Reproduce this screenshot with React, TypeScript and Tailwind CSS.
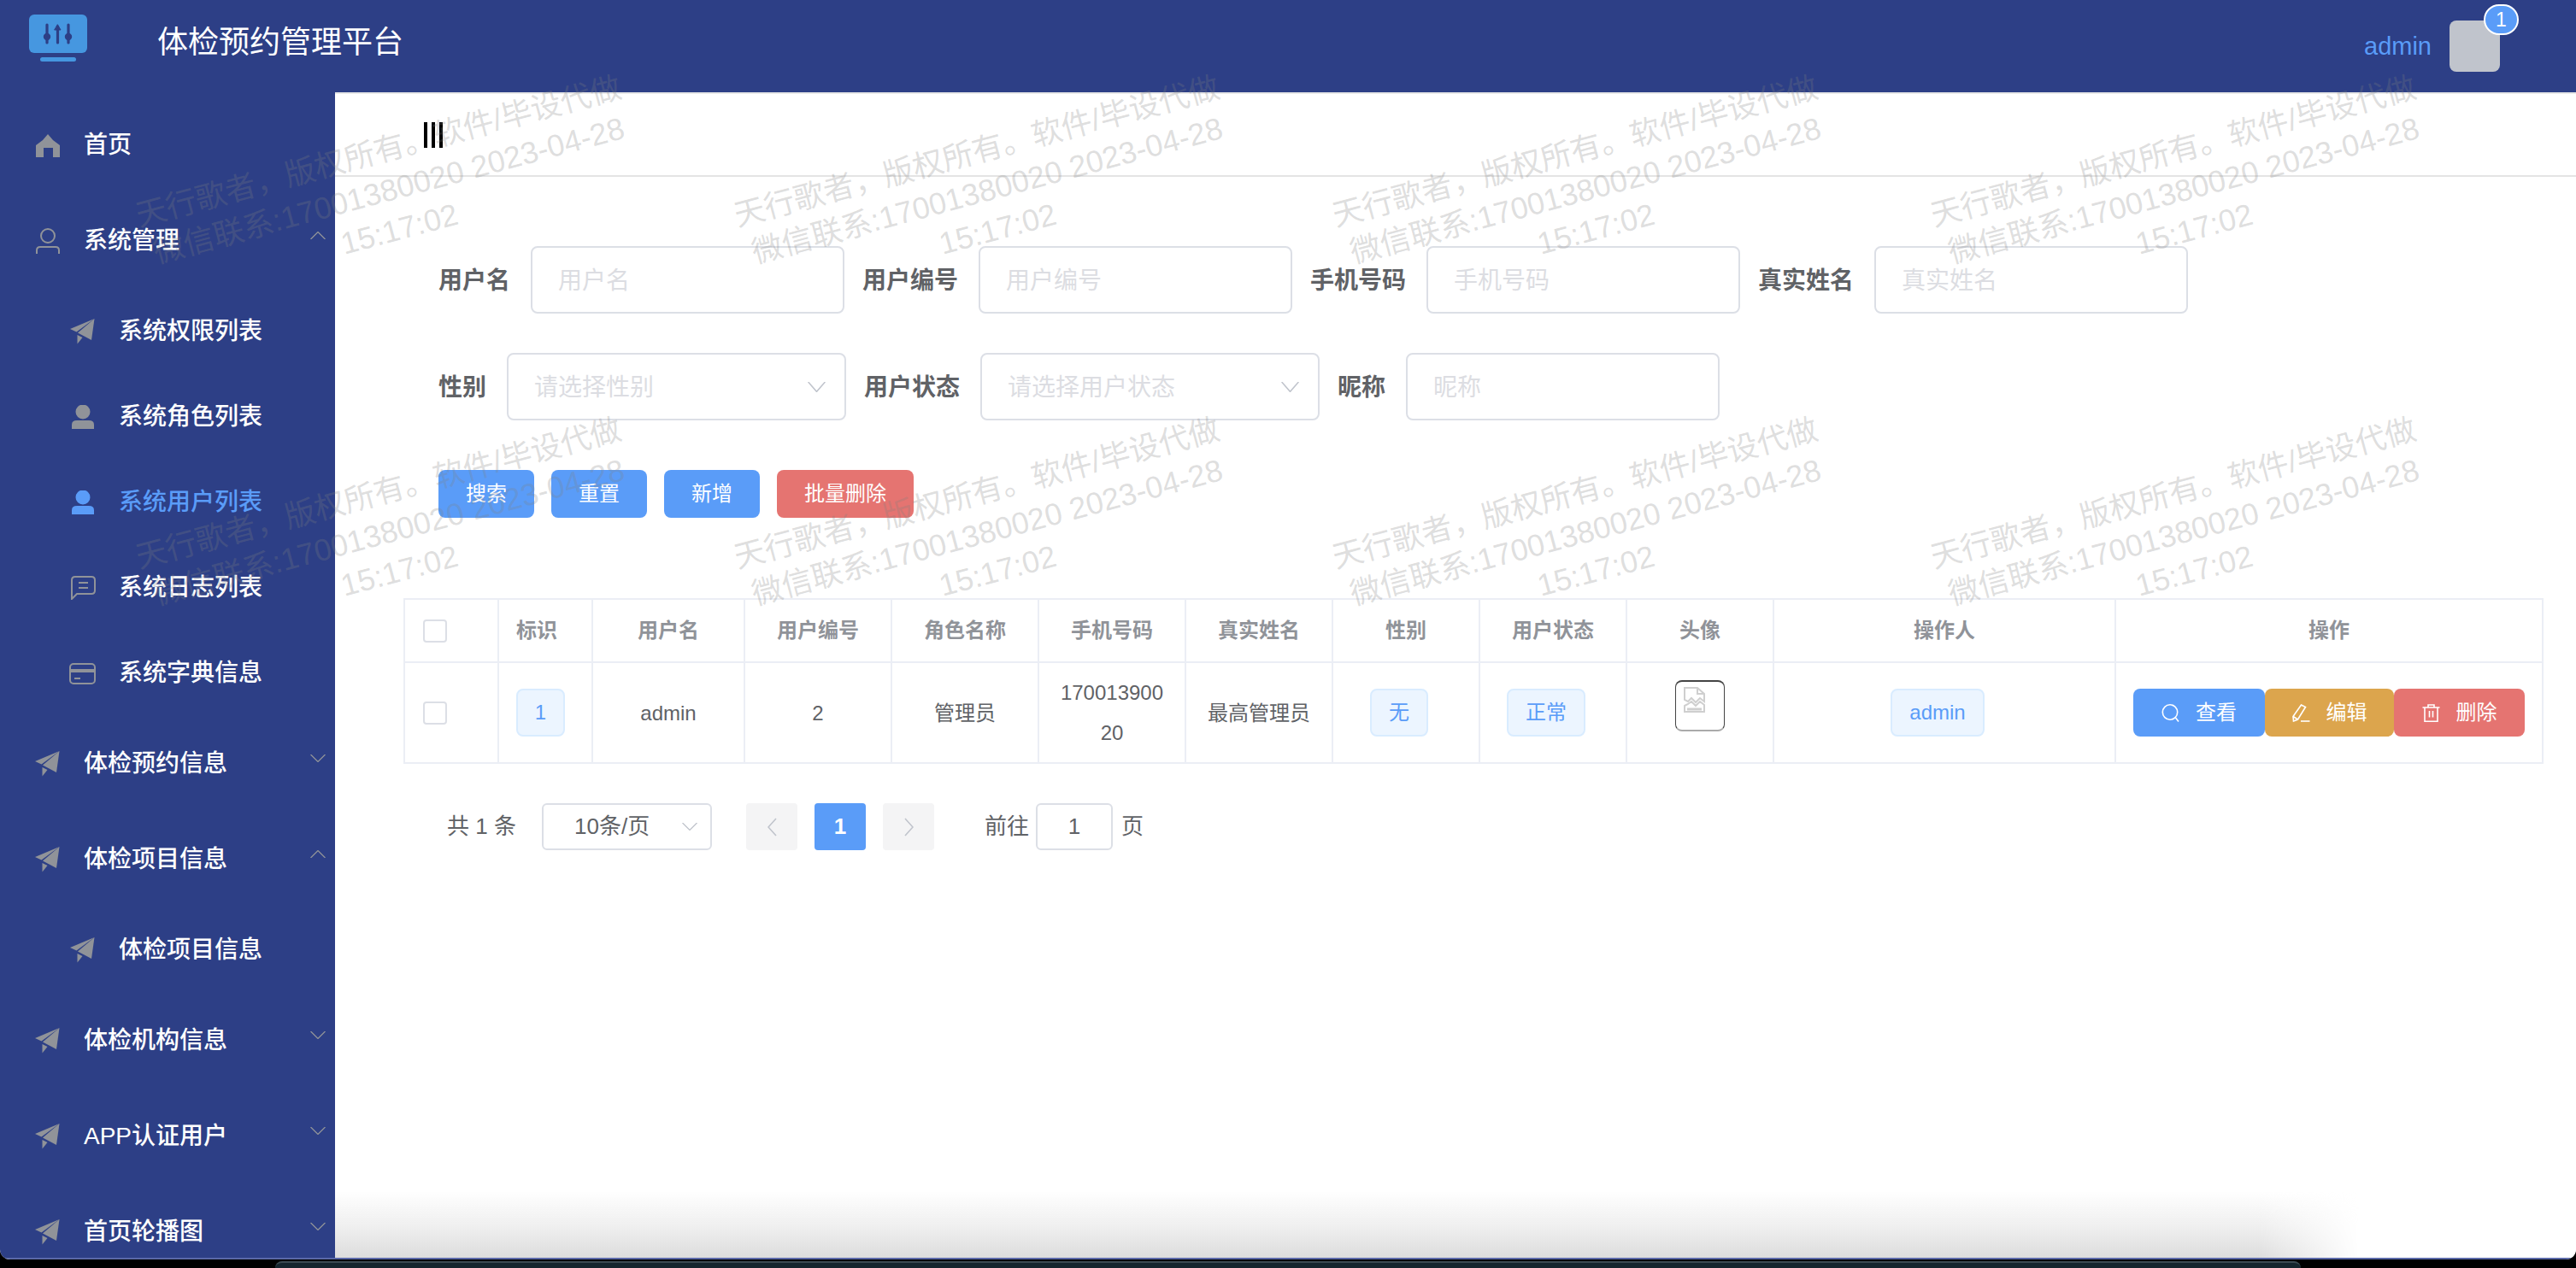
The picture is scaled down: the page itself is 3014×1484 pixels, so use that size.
import React from "react";

const FONT = '"Liberation Sans", "Noto Sans CJK SC", sans-serif';

function Plane() {
  return (
    <svg width="29" height="30" viewBox="0 0 29 30" fill="#909399">
      <path d="M28.5 0 L0 12 L7.5 15.5 Z" />
      <path d="M28.5 0 L9 16.5 L25 25 Z" />
      <path d="M8.5 19 V29.5 L14.5 22 Z" />
    </svg>
  );
}

function Home() {
  return (
    <svg width="28" height="27" viewBox="0 0 28 27" fill="#909399">
      <path d="M14 0 L20 7 L28 13 V27 H20 V16 H9 V27 H0 V13 L8 7 Z" />
    </svg>
  );
}

function UserLine() {
  return (
    <svg width="28" height="30" viewBox="0 0 28 30" fill="none" stroke="#909399" strokeWidth="2">
      <ellipse cx="14" cy="9" rx="8" ry="8" />
      <path d="M1 30 V26 Q1 22 5 22 H23 Q27 22 27 26 V30" />
    </svg>
  );
}

function UserFill({ color = "#909399" }: { color?: string }) {
  return (
    <svg width="28" height="28" viewBox="0 0 28 28" fill={color}>
      <ellipse cx="14" cy="8" rx="8.5" ry="8.5" />
      <path d="M1 28 V23 Q1 18 7 18 H21 Q27 18 27 23 V28 Z" />
    </svg>
  );
}

function Chat() {
  return (
    <svg width="30" height="28" viewBox="0 0 30 28" fill="none" stroke="#909399" strokeWidth="2">
      <path d="M2 27 V5 Q2 1 6 1 H25 Q29 1 29 5 V17 Q29 21 25 21 H8 Z" />
      <path d="M10 8 H21 M10 14 H21" />
    </svg>
  );
}

function Card() {
  return (
    <svg width="31" height="25" viewBox="0 0 31 25" fill="none" stroke="#909399" strokeWidth="2">
      <rect x="1" y="1" width="29" height="23" rx="4" />
      <path d="M1 9 H30" strokeWidth="4" />
      <path d="M6 18 H13" />
    </svg>
  );
}

function Chevron({ up = false, color = "#909399", w = 18, h = 9 }: { up?: boolean; color?: string; w?: number; h?: number }) {
  return (
    <svg width={w} height={h} viewBox="0 0 18 9" preserveAspectRatio="none" fill="none" stroke={color} strokeWidth="1.3">
      {up ? <path d="M0.5 9 L9 0.5 L17.5 9" /> : <path d="M0.5 0 L9 8.5 L17.5 0" />}
    </svg>
  );
}

function MenuTop({ icon, label, chevron }: { icon: React.ReactNode; label: string; chevron?: "up" | "down" }) {
  return (
    <div className="flex h-[112px] shrink-0 items-center pl-[41px]">
      <div className="mr-[28px] flex w-[29px] justify-center">{icon}</div>
      <span className="text-[28px] font-medium text-white">{label}</span>
      {chevron && (
        <div className="mb-[13px] ml-auto mr-[11px]">
          <Chevron up={chevron === "up"} />
        </div>
      )}
    </div>
  );
}

function MenuSub({ icon, label, active }: { icon: React.ReactNode; label: string; active?: boolean }) {
  return (
    <div className="flex h-[100px] shrink-0 items-center pl-[81px]">
      <div className="mr-[27px] flex w-[31px] justify-center">{icon}</div>
      <span className={active ? "text-[28px] font-medium text-[#5a9cf8]" : "text-[28px] font-medium text-white"}>{label}</span>
    </div>
  );
}

function Sidebar() {
  return (
    <aside className="flex w-[392px] shrink-0 flex-col bg-[#2d3f86] pt-[6px]">
      <MenuTop icon={<Home />} label="首页" />
      <MenuTop icon={<UserLine />} label="系统管理" chevron="up" />
      <MenuSub icon={<Plane />} label="系统权限列表" />
      <MenuSub icon={<UserFill />} label="系统角色列表" />
      <MenuSub icon={<UserFill color="#5a9cf8" />} label="系统用户列表" active />
      <MenuSub icon={<Chat />} label="系统日志列表" />
      <MenuSub icon={<Card />} label="系统字典信息" />
      <MenuTop icon={<Plane />} label="体检预约信息" chevron="down" />
      <MenuTop icon={<Plane />} label="体检项目信息" chevron="up" />
      <MenuSub icon={<Plane />} label="体检项目信息" />
      <MenuTop icon={<Plane />} label="体检机构信息" chevron="down" />
      <MenuTop icon={<Plane />} label="APP认证用户" chevron="down" />
      <MenuTop icon={<Plane />} label="首页轮播图" chevron="down" />
    </aside>
  );
}

function Header() {
  return (
    <header className="flex h-[108px] shrink-0 items-center bg-[#2d3f86] pl-[34px]">
      <svg className="mb-[19px]" width="68" height="55" viewBox="0 0 68 55">
        <rect x="0" y="0" width="68" height="45" rx="6" fill="#4697e0" />
        <rect x="13" y="50" width="42" height="5" rx="2.5" fill="#4697e0" />
        <g stroke="#2d3f86" strokeWidth="3.2" fill="#2d3f86" strokeLinecap="round">
          <path d="M21 12 V33 M33.5 14 V33 M46 12 V33" />
          <circle cx="21" cy="26" r="2.6" />
          <path d="M33.5 12 L37 18 H30 Z" strokeWidth="1" />
          <circle cx="46" cy="26" r="2.6" />
        </g>
      </svg>
      <h1 className="mb-[9px] ml-[82px] text-[36px] font-normal text-white">体检预约管理平台</h1>
      <span className="ml-auto mt-[2px] text-[29px] text-[#5a9cf8]">admin</span>
      <div className="relative ml-[21px] mr-[89px] h-[60px] w-[59px] rounded-[8px] bg-[#c0c4cc]">
        <span className="absolute left-[40px] top-[-19px] flex h-[36px] w-[41px] items-center justify-center rounded-full border-2 border-white bg-[#5a9cf8] text-[23px] text-white">
          1
        </span>
      </div>
    </header>
  );
}

function Field({ label, placeholder }: { label: string; placeholder: string }) {
  return (
    <div className="flex items-center gap-[24px]">
      <label className="pt-[3px] text-[28px] font-bold text-[#606266]">{label}</label>
      <input
        placeholder={placeholder}
        className="h-[79px] w-[367px] rounded-[8px] border-2 border-[#dcdfe6] bg-transparent px-[30px] pt-[3px] text-[28px] outline-none placeholder:text-[#dcdde2]"
      />
    </div>
  );
}

function SelectField({ label, placeholder }: { label: string; placeholder: string }) {
  return (
    <div className="flex items-center gap-[24px]">
      <label className="pt-[3px] text-[28px] font-bold text-[#606266]">{label}</label>
      <div className="flex h-[79px] w-[397px] items-center justify-between rounded-[8px] border-2 border-[#dcdfe6] pl-[30px] pr-[22px]">
        <span className="pt-[3px] text-[28px] text-[#dcdde2]">{placeholder}</span>
        <Chevron color="#c0c4cc" w={21} h={12} />
      </div>
    </div>
  );
}

function Tag({ children }: { children: React.ReactNode }) {
  return (
    <span className="mr-[16px] inline-flex h-[56px] items-center rounded-[8px] border-2 border-[#d9ecff] bg-[#ecf5ff] px-[20px] text-[24px] leading-none text-[#5a9cf8]">
      {children}
    </span>
  );
}

function Check() {
  return <span className="block h-[27px] w-[28px] rounded-[4px] border-2 border-[#dcdfe6] bg-white" />;
}

function BrokenImage() {
  return (
    <svg width="25" height="30" viewBox="0 0 25 30" fill="none" stroke="#cfcfcf" strokeWidth="2">
      <path d="M1 15 V1 H16 L24 8 V17 L19 13 L14 18 L9 13 L5 17 Z" />
      <path d="M16 1 V8 H24" />
      <path d="M1 22 L5 20 L9 17 L14 22 L19 17 L24 21 V29 H1 Z" />
      <path d="M4 26 H21" strokeWidth="3" />
    </svg>
  );
}

function Th({ children }: { children?: React.ReactNode }) {
  return <th className="border-2 border-[#ebeef5] text-center text-[24px] font-bold text-[#909399]">{children}</th>;
}

function Td({ children }: { children?: React.ReactNode }) {
  return <td className="border-2 border-[#ebeef5] px-[22px] text-center text-[24px] leading-[47px] text-[#606266]">{children}</td>;
}

function UserTable() {
  return (
    <table className="ml-[80px] w-[2502px] table-fixed border-collapse">
      <colgroup>
        <col className="w-[110px]" />
        <col className="w-[110px]" />
        <col className="w-[178px]" />
        <col className="w-[172px]" />
        <col className="w-[172px]" />
        <col className="w-[172px]" />
        <col className="w-[172px]" />
        <col className="w-[172px]" />
        <col className="w-[172px]" />
        <col className="w-[172px]" />
        <col className="w-[400px]" />
        <col className="w-[500px]" />
      </colgroup>
      <thead>
        <tr className="h-[74px]">
          <th className="border-2 border-[#ebeef5] pl-[21px]">
            <Check />
          </th>
          <th className="border-2 border-[#ebeef5] pl-[20px] text-left text-[24px] font-bold text-[#909399]">标识</th>
          <Th>用户名</Th>
          <Th>用户编号</Th>
          <Th>角色名称</Th>
          <Th>手机号码</Th>
          <Th>真实姓名</Th>
          <Th>性别</Th>
          <Th>用户状态</Th>
          <Th>头像</Th>
          <Th>操作人</Th>
          <Th>操作</Th>
        </tr>
      </thead>
      <tbody>
        <tr className="h-[118px]">
          <td className="border-2 border-[#ebeef5] pl-[21px]">
            <Check />
          </td>
          <td className="border-2 border-[#ebeef5] pl-[20px]">
            <span className="inline-flex h-[56px] w-[57px] items-center justify-center rounded-[8px] border-2 border-[#d9ecff] bg-[#ecf5ff] text-[24px] text-[#5a9cf8]">
              1
            </span>
          </td>
          <Td>admin</Td>
          <Td>2</Td>
          <Td>管理员</Td>
          <Td>
            <span className="break-all">17001390020</span>
          </Td>
          <Td>
            <span className="whitespace-nowrap">最高管理员</span>
          </Td>
          <Td>
            <Tag>无</Tag>
          </Td>
          <Td>
            <Tag>正常</Tag>
          </Td>
          <Td>
            <div className="mx-auto mb-[16px] flex h-[60px] w-[58px] justify-center overflow-hidden rounded-[8px] border border-b-2 border-t-2 border-[#444444] border-b-[#aaaaaa] pt-[6px]">
              <div className="mr-[14px]">
                <BrokenImage />
              </div>
            </div>
          </Td>
          <Td>
            <Tag>admin</Tag>
          </Td>
          <td className="border-2 border-[#ebeef5] pl-[20px]">
            <div className="flex">
              <ActionButton color="bg-[#5a9cf8]" icon={<SearchIcon />} label="查看" w="w-[154px]" />
              <ActionButton color="bg-[#dca54d]" icon={<EditIcon />} label="编辑" w="w-[151px]" />
              <ActionButton color="bg-[#e57471]" icon={<TrashIcon />} label="删除" w="w-[153px]" />
            </div>
          </td>
        </tr>
      </tbody>
    </table>
  );
}

function ActionButton({ color, icon, label, w }: { color: string; icon: React.ReactNode; label: string; w: string }) {
  return (
    <button className={`flex h-[56px] items-center justify-center gap-[19px] rounded-[8px] text-[24px] text-white ${color} ${w}`}>
      {icon}
      <span>{label}</span>
    </button>
  );
}

function SearchIcon() {
  return (
    <svg width="21" height="21" viewBox="0 0 21 21" fill="none" stroke="white" strokeWidth="1.6">
      <circle cx="10" cy="9.5" r="8.7" />
      <path d="M16.5 16 L20 20.5" />
    </svg>
  );
}

function EditIcon() {
  return (
    <svg width="21" height="21" viewBox="0 0 21 21" fill="none" stroke="white" strokeWidth="1.6">
      <path d="M10.5 1 L15.5 3.5 L6.5 18 L1.5 20 L1 14.5 Z" />
      <path d="M1 14.5 L6.5 18" />
      <path d="M10 20 H20.5" />
    </svg>
  );
}

function TrashIcon() {
  return (
    <svg width="21" height="21" viewBox="0 0 21 21" fill="none" stroke="white" strokeWidth="1.6">
      <path d="M0.5 4 H20.5 M7 4 V1 H14 V4" />
      <path d="M3 4 V20.2 H18 V4" />
      <path d="M8.5 8 V15.5 M12.5 8 V15.5" />
    </svg>
  );
}

function Pagination() {
  return (
    <div className="ml-[131px] mt-[46px] flex h-[55px] items-center text-[26px] text-[#606266]">
      <span className="w-[111px]">共 1 条</span>
      <div className="flex h-[55px] w-[199px] items-center rounded-[6px] border-2 border-[#dcdfe6] pl-[36px] pr-[15px]">
        <span>10条/页</span>
        <div className="ml-auto">
          <Chevron color="#c0c4cc" />
        </div>
      </div>
      <button className="ml-[40px] flex h-[55px] w-[60px] items-center justify-center rounded-[4px] bg-[#f4f4f5]">
        <svg width="11" height="22" viewBox="0 0 11 22" fill="none" stroke="#c0c4cc" strokeWidth="1.6">
          <path d="M10 1 L1 11 L10 21" />
        </svg>
      </button>
      <button className="ml-[20px] flex h-[55px] w-[60px] items-center justify-center rounded-[4px] bg-[#5a9cf8] font-bold text-white">
        1
      </button>
      <button className="ml-[20px] flex h-[55px] w-[60px] items-center justify-center rounded-[4px] bg-[#f4f4f5]">
        <svg width="11" height="22" viewBox="0 0 11 22" fill="none" stroke="#c0c4cc" strokeWidth="1.6">
          <path d="M1 1 L10 11 L1 21" />
        </svg>
      </button>
      <span className="ml-[59px]">前往</span>
      <div className="ml-[8px] flex h-[55px] w-[90px] items-center justify-center rounded-[6px] border-2 border-[#dcdfe6]">1</div>
      <span className="ml-[10px]">页</span>
    </div>
  );
}

function Watermark() {
  const tiles = [0, 1, 2, 3, 4, 5, 6, 7];
  return (
    <div className="pointer-events-none absolute left-[105px] top-[22px] grid grid-cols-[repeat(4,700px)] grid-rows-[repeat(2,400px)]">
      {tiles.map((i) => (
        <div key={i} className="flex items-center justify-center">
          <div className="rotate-[-15deg] whitespace-nowrap text-center text-[36px] leading-[47px] text-[rgba(128,128,128,0.27)]">
            <div>天行歌者，版权所有。软件/毕设代做</div>
            <div>微信联系:17001380020 2023-04-28</div>
            <div>15:17:02</div>
          </div>
        </div>
      ))}
    </div>
  );
}

function Main() {
  return (
    <main className="relative flex-1 bg-white">
      <div className="flex h-[99px] items-center gap-[5px] border-y-2 border-t-[#e8e8e8] border-b-[#e4e4e4] pl-[104px]">
        <span className="h-[30px] w-[4px] bg-black" />
        <span className="h-[30px] w-[4px] bg-black" />
        <span className="h-[30px] w-[4px] bg-black" />
      </div>
      <div className="pl-[121px] pt-[81px]">
        <div className="flex gap-[21px]">
          <Field label="用户名" placeholder="用户名" />
          <Field label="用户编号" placeholder="用户编号" />
          <Field label="手机号码" placeholder="手机号码" />
          <Field label="真实姓名" placeholder="真实姓名" />
        </div>
        <div className="mt-[46px] flex gap-[21px]">
          <SelectField label="性别" placeholder="请选择性别" />
          <SelectField label="用户状态" placeholder="请选择用户状态" />
          <Field label="昵称" placeholder="昵称" />
        </div>
        <div className="mt-[58px] flex gap-[20px]">
          <button className="h-[56px] w-[112px] rounded-[8px] bg-[#5a9cf8] text-[24px] text-white">搜索</button>
          <button className="h-[56px] w-[112px] rounded-[8px] bg-[#5a9cf8] text-[24px] text-white">重置</button>
          <button className="h-[56px] w-[112px] rounded-[8px] bg-[#5a9cf8] text-[24px] text-white">新增</button>
          <button className="h-[56px] w-[160px] rounded-[8px] bg-[#e57471] text-[24px] text-white">批量删除</button>
        </div>
      </div>
      <div className="mt-[94px]">
        <UserTable />
      </div>
      <Pagination />
      {/* dock shadow at the bottom edge */}
      <div className="pointer-events-none absolute bottom-0 left-0 h-[78px] w-[2368px] bg-[linear-gradient(to_bottom,rgba(255,255,255,0),rgba(240,240,240,1)_50%,rgba(221,221,221,1))] [mask-image:linear-gradient(to_right,black_95%,transparent)]" />
    </main>
  );
}

export default function App() {
  return (
    <div className="relative h-[1484px] w-[3014px] overflow-hidden bg-black" style={{ fontFamily: FONT }}>
      <div className="flex h-[1474px] flex-col overflow-hidden rounded-b-[12px] bg-white">
        <Header />
        <div className="flex min-h-0 flex-1 overflow-hidden border-b-2 border-b-[#5a68a8]">
          <Sidebar />
          <Main />
        </div>
      </div>
      <div className="mx-auto mt-[2px] h-[8px] w-[2370px] rounded-t-[12px] border-t-2 border-[#3b4a52] bg-[#15252e]" />
      <Watermark />
    </div>
  );
}
